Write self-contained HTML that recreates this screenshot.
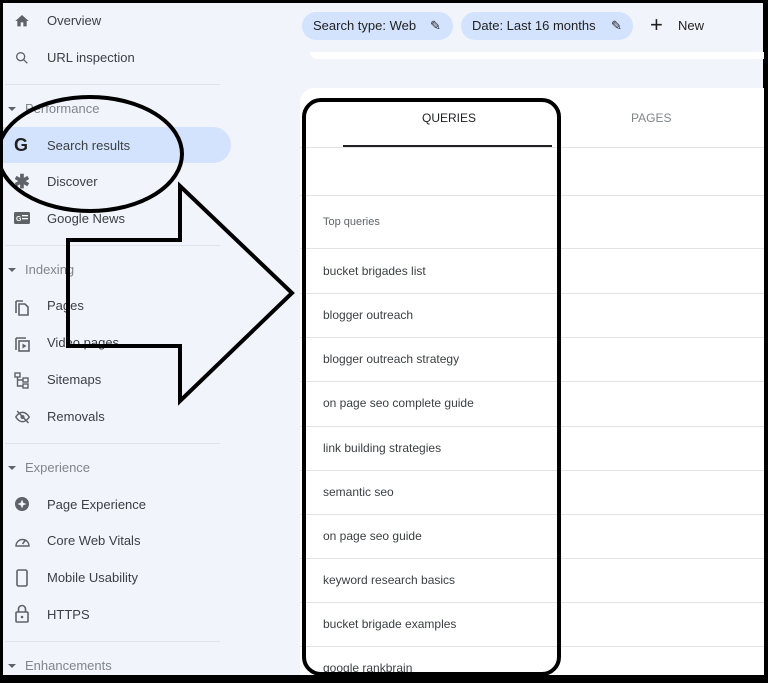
<!DOCTYPE html>
<html><head><meta charset="utf-8"><style>
*{margin:0;padding:0;box-sizing:border-box}
body{width:768px;height:683px;overflow:hidden;background:#000;font-family:"Liberation Sans",sans-serif;position:relative}
#bg{position:absolute;left:3px;top:3px;width:760px;height:672px;background:#f1f4fb;overflow:hidden}
.ab{position:absolute}
.nav{position:absolute;left:47px;font-size:13px;color:#3c4043;white-space:nowrap}
.sec{position:absolute;left:25px;font-size:13px;color:#80868b}
.tri{position:absolute;left:8px;width:0;height:0;border-left:4px solid transparent;border-right:4px solid transparent;border-top:4px solid #5f6368}
.sep{position:absolute;left:5px;width:215px;height:1px;background:#e0e3e8}
.ic{position:absolute;left:14px}
.row{position:absolute;left:323px;font-size:12px;color:#3c4043}
.hl{position:absolute;left:300px;width:464px;height:1px;background:#e3e3e3}
.chip{position:absolute;top:12px;height:28px;border-radius:14px;background:#d3e3fd;font-size:13px;color:#1f1f1f;line-height:28px;padding-left:11px}
</style></head><body>
<div id="bg"></div>
<div class="ab" style="left:3px;top:127px;width:228px;height:36px;background:#d3e3fd;border-radius:0 18px 18px 0"></div>
<svg class="ic" style="top:13px" width="16" height="16" viewBox="0 0 24 24"><path d="M10 20v-6h4v6h5v-8h3L12 3 2 12h3v8z" fill="#5f6368"/></svg>
<div class="nav" style="top:13px">Overview</div>
<svg class="ic" style="top:50px" width="16" height="16" viewBox="0 0 24 24"><circle cx="10" cy="10" r="6" fill="none" stroke="#5f6368" stroke-width="2"/><path d="M14.5 14.5L20 20" stroke="#5f6368" stroke-width="2"/></svg>
<div class="nav" style="top:50px">URL inspection</div>
<div class="sep" style="top:84px"></div>
<div class="tri" style="top:107px"></div><div class="sec" style="top:101px">Performance</div>
<div class="nav" style="left:14px;top:135px;font-weight:bold;font-size:18px;color:#202124">G</div>
<div class="nav" style="top:138px">Search results</div>
<div class="nav" style="left:14px;top:171px;font-size:19px;color:#5f6368;font-weight:bold">✱</div>
<div class="nav" style="top:174px">Discover</div>
<svg class="ic" style="top:211px" width="17" height="14" viewBox="0 0 17 14"><rect x="0" y="1" width="16" height="12" rx="1.5" fill="#5f6368"/><text x="2" y="10" font-size="7" fill="#fff" font-family="Liberation Sans" font-weight="bold">G</text><rect x="8" y="4" width="6" height="1.3" fill="#fff"/><rect x="8" y="7" width="6" height="1.3" fill="#fff"/></svg>
<div class="nav" style="top:211px">Google News</div>
<div class="sep" style="top:245px"></div>
<div class="tri" style="top:268px"></div><div class="sec" style="top:262px">Indexing</div>
<svg class="ic" style="top:298px" width="16" height="18" viewBox="0 0 16 18"><path d="M2 3v12M2 3h7" stroke="#5f6368" stroke-width="1.6" fill="none"/><path d="M5 6h6l3 3v8H5z" stroke="#5f6368" stroke-width="1.6" fill="none"/></svg>
<div class="nav" style="top:298px">Pages</div>
<svg class="ic" style="top:335px" width="16" height="18" viewBox="0 0 16 18"><path d="M2 3v12M2 3h10" stroke="#5f6368" stroke-width="1.6" fill="none"/><rect x="5" y="6" width="10" height="10" stroke="#5f6368" stroke-width="1.6" fill="none"/><path d="M8.5 8.5v5l4-2.5z" fill="#5f6368"/></svg>
<div class="nav" style="top:335px">Video pages</div>
<svg class="ic" style="top:372px" width="16" height="17" viewBox="0 0 16 17"><g stroke="#5f6368" stroke-width="1.4" fill="none"><rect x="1" y="1" width="5" height="4"/><rect x="9" y="6" width="5" height="4"/><rect x="9" y="12" width="5" height="4"/><path d="M3.5 5v9h5.5M3.5 8h5.5"/></g></svg>
<div class="nav" style="top:372px">Sitemaps</div>
<svg class="ic" style="top:409px" width="17" height="16" viewBox="0 0 24 24"><path d="M2 12s4-7 10-7 10 7 10 7-4 7-10 7S2 12 2 12z" stroke="#5f6368" stroke-width="2.2" fill="none"/><circle cx="12" cy="12" r="3" fill="#5f6368"/><path d="M4 3l17 18" stroke="#5f6368" stroke-width="2.2"/></svg>
<div class="nav" style="top:409px">Removals</div>
<div class="sep" style="top:443px"></div>
<div class="tri" style="top:466px"></div><div class="sec" style="top:460px">Experience</div>
<svg class="ic" style="top:496px" width="16" height="16" viewBox="0 0 16 16"><circle cx="8" cy="8" r="7" fill="#5f6368"/><path d="M8 3.5l1.3 3.2 3.2 1.3-3.2 1.3L8 12.5 6.7 9.3 3.5 8l3.2-1.3z" fill="#f1f4fb"/></svg>
<div class="nav" style="top:497px">Page Experience</div>
<svg class="ic" style="top:533px" width="17" height="16" viewBox="0 0 17 16"><path d="M2 13a6.5 6.5 0 1 1 13 0z" stroke="#5f6368" stroke-width="1.4" fill="none"/><path d="M8.5 11l3-4" stroke="#5f6368" stroke-width="1.6"/></svg>
<div class="nav" style="top:533px">Core Web Vitals</div>
<svg class="ic" style="top:569px;left:16px" width="12" height="18" viewBox="0 0 12 18"><rect x="1" y="1" width="10" height="16" rx="1.5" stroke="#5f6368" stroke-width="1.6" fill="none"/></svg>
<div class="nav" style="top:570px">Mobile Usability</div>
<svg class="ic" style="top:604px;left:15px" width="14" height="19" viewBox="0 0 14 19"><path d="M3.5 8V5a3.5 3.5 0 0 1 7 0v3" stroke="#5f6368" stroke-width="1.6" fill="none"/><rect x="1" y="8" width="12" height="10" rx="1" stroke="#5f6368" stroke-width="1.6" fill="none"/><circle cx="7" cy="13" r="1.3" fill="#5f6368"/></svg>
<div class="nav" style="top:607px">HTTPS</div>
<div class="sep" style="top:641px"></div>
<div class="tri" style="top:664px"></div><div class="sec" style="top:658px">Enhancements</div>
<div class="chip" style="left:302px;width:151px">Search type: Web <span style="position:absolute;left:128px;top:0">✎</span></div>
<div class="chip" style="left:461px;width:172px">Date: Last 16 months <span style="position:absolute;left:150px;top:0">✎</span></div>
<div class="ab" style="left:650px;top:13px;font-size:22px;color:#1f1f1f;line-height:24px">+</div>
<div class="ab" style="left:678px;top:18px;font-size:13px;color:#1f1f1f">New</div>
<div class="ab" style="left:310px;top:52px;width:454px;height:7px;background:#fff;border-radius:0 0 0 8px"></div>
<div class="ab" style="left:300px;top:88px;width:464px;height:587px;background:#fff;border-radius:14px 0 0 0"></div>
<div class="ab" style="left:422px;top:111px;font-size:12px;color:#202124">QUERIES</div>
<div class="ab" style="left:631px;top:111px;font-size:12px;color:#80868b">PAGES</div>
<div class="ab" style="left:343px;top:145px;width:209px;height:2px;background:#202124"></div>
<div class="hl" style="top:147px"></div>
<div class="hl" style="top:195px"></div>
<div class="ab" style="left:323px;top:216px;font-size:11px;color:#5f6368">Top queries</div>
<div class="hl" style="top:248px"></div>
<div class="row" style="top:264px">bucket brigades list</div>
<div class="hl" style="top:293px"></div>
<div class="row" style="top:308px">blogger outreach</div>
<div class="hl" style="top:337px"></div>
<div class="row" style="top:352px">blogger outreach strategy</div>
<div class="hl" style="top:381px"></div>
<div class="row" style="top:396px">on page seo complete guide</div>
<div class="hl" style="top:426px"></div>
<div class="row" style="top:441px">link building strategies</div>
<div class="hl" style="top:470px"></div>
<div class="row" style="top:485px">semantic seo</div>
<div class="hl" style="top:514px"></div>
<div class="row" style="top:529px">on page seo guide</div>
<div class="hl" style="top:558px"></div>
<div class="row" style="top:573px">keyword research basics</div>
<div class="hl" style="top:602px"></div>
<div class="row" style="top:617px">bucket brigade examples</div>
<div class="hl" style="top:646px"></div>
<div class="row" style="top:661px">google rankbrain</div>
<svg class="ab" style="left:0;top:0" width="768" height="683" viewBox="0 0 768 683">
<rect x="304" y="100" width="255" height="574" rx="17" fill="none" stroke="#000" stroke-width="4"/>
<ellipse cx="90" cy="154" rx="92" ry="57" fill="none" stroke="#000" stroke-width="4"/>
<path d="M180 186L292 293L180 401V346H68V240H180Z" fill="none" stroke="#000" stroke-width="4" stroke-linejoin="miter"/>
</svg>
</body></html>
